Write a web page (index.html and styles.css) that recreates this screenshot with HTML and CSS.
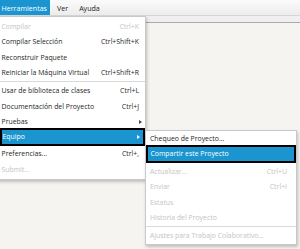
FILE: index.html
```html
<!DOCTYPE html>
<html>
<head>
<meta charset="utf-8">
<link rel="stylesheet" href="styles.css">
</head>
<body>
<div class="app">
  <div class="menubar">
    <span class="mb-item active">Herramientas</span>
    <span class="mb-item ver">Ver</span>
    <span class="mb-item">Ayuda</span>
  </div>
  <div class="toolstrip"></div>
  <div class="workspace"></div>

  <div class="menu main">
    <div class="row disabled"><span>Compilar</span><span class="sc">Ctrl+K</span></div>
    <div class="row"><span>Compilar Selección</span><span class="sc">Ctrl+Shift+K</span></div>
    <div class="row"><span>Reconstruir Paquete</span></div>
    <div class="row"><span>Reiniciar la Máquina Virtual</span><span class="sc">Ctrl+Shift+R</span></div>
    <div class="sep"></div>
    <div class="row"><span>Usar de biblioteca de clases</span><span class="sc">Ctrl+L</span></div>
    <div class="row"><span>Documentación del Proyecto</span><span class="sc">Ctrl+J</span></div>
    <div class="row"><span>Pruebas</span><span class="arrow"></span></div>
    <div class="row sel equipo"><span>Equipo</span><span class="arrow white"></span></div>
    <div class="row tall"><span>Preferencias...</span><span class="sc">Ctrl+,</span></div>
    <div class="row tall disabled"><span>Submit...</span></div>
  </div>

  <div class="menu sub">
    <div class="row"><span>Chequeo de Proyecto...</span></div>
    <div class="row sel compartir"><span>Compartir este Proyecto</span></div>
    <div class="row tall disabled"><span>Actualizar...</span><span class="sc">Ctrl+U</span></div>
    <div class="row disabled"><span>Enviar</span><span class="sc">Ctrl+I</span></div>
    <div class="row disabled"><span>Estatus</span></div>
    <div class="row disabled"><span>Historia del Proyecto</span></div>
    <div class="sep"></div>
    <div class="row disabled"><span>Ajustes para Trabajo Colaborativo...</span></div>
  </div>
</div>
</body>
</html>
```

FILE: styles.css
```css
* { box-sizing: border-box; }
html, body {
  margin: 0;
  padding: 0;
}
body {
  width: 300px;
  height: 249px;
  overflow: hidden;
  font-family: "Open Sans", "Liberation Sans", sans-serif;
  font-size: 6.9px;
  color: #262626;
}
.app {
  position: relative;
  width: 300px;
  height: 249px;
  background: #f5f4f0;
  display: flex;
  flex-direction: column;
}
.menubar {
  height: 16px;
  display: flex;
  align-items: stretch;
  background: linear-gradient(#fbfbfb, #ececec);
  border-bottom: 1px solid #d6d6d6;
}
.mb-item {
  display: flex;
  align-items: center;
  padding: 0 5px 0 6px;
  font-size: 7.1px;
  color: #222;
}
.mb-item.ver { padding-left: 7px; }
.mb-item.active {
  background: #1b95cf;
  color: #fff;
  padding: 0 3px 0 1.5px;
  width: 50px;
}
.toolstrip {
  height: 7px;
  background: #efefef;
  border-bottom: 1px solid #a9a9a9;
}
.workspace {
  flex: 1;
  background: #f5f4f0;
}
.menu {
  position: absolute;
  background: #fff;
  border: 1px solid #c9c9c9;
  display: flex;
  flex-direction: column;
  box-shadow: 1px 2px 3px rgba(0,0,0,0.22);
}
.menu.main {
  left: -4px;
  top: 16px;
  width: 150px;
  padding: 1.5px 0 1px;
}
.menu.sub {
  left: 145px;
  top: 130px;
  width: 152px;
  padding: 0 0 1px;
}
.row {
  height: 15.5px;
  display: flex;
  align-items: center;
  justify-content: space-between;
  padding: 0 6px 0 4.5px;
  white-space: nowrap;
}
.menu.sub .row {
  padding: 0 9px 0 4px;
}
.row.tall { height: 16px; }
.row.disabled { color: #c4c4c4; }
.sep {
  height: 2px;
  border-top: 1px solid #dadada;
  margin-top: 0.5px;
}
.menu.sub .sep { margin-top: 0; }
.row.sel {
  background: #1b95cf;
  color: #fff;
  border: 2px solid #000;
}
.row.equipo {
  height: 18px;
  margin: -2px 0 0 3px;
  padding: 0 4px 0 0.5px;
}
.menu.sub .row.compartir {
  height: 18.5px;
  margin-top: -2px;
  padding: 0 9px 0 2.5px;
}
.arrow {
  width: 0;
  height: 0;
  border-top: 2.5px solid transparent;
  border-bottom: 2.5px solid transparent;
  border-left: 3px solid #444;
  margin-right: -3px;
}
.arrow.white { border-left-color: #fff; margin-right: -1px; }
```
